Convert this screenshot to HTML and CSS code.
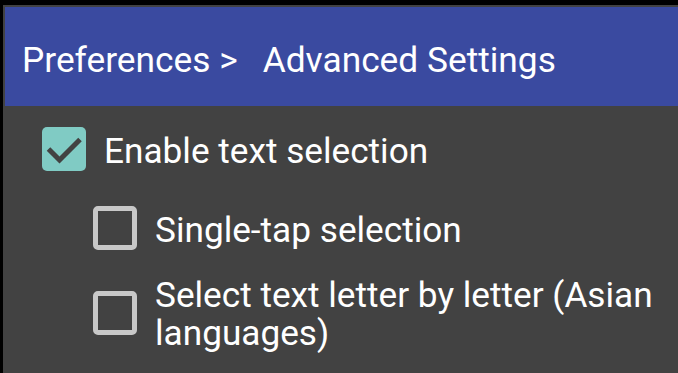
FILE: index.html
```html
<!DOCTYPE html>
<html lang="en">
<head>
  <meta charset="UTF-8">
  <title>Advanced Settings</title>
  <link rel="stylesheet" href="styles.css">
</head>
<body>
  <div class="dialogo">
    <div class="cabecalho">
      <span class="trilha">Preferences &gt;</span>
      <span class="titulo">Advanced Settings</span>
    </div>
    <ul class="opcoes">
      <li class="opcao">
        <span class="caixa marcada">
          <svg viewBox="0 0 44 44" width="44" height="44">
            <path d="M6.5 22 L17.5 33 L38 12.5" fill="none" stroke="#424242" stroke-width="5"/>
          </svg>
        </span>
        <span class="rotulo">Enable text selection</span>
      </li>
      <li class="opcao sub">
        <span class="caixa"></span>
        <span class="rotulo">Single-tap selection</span>
      </li>
      <li class="opcao sub">
        <span class="caixa"></span>
        <span class="rotulo">Select text letter by letter (Asian languages)</span>
      </li>
    </ul>
  </div>
</body>
</html>
```

FILE: styles.css
```css
* {
  box-sizing: border-box;
  margin: 0;
  padding: 0;
}

body {
  background: #000;
  font-family: Roboto, "Noto Sans", sans-serif;
  color: #fff;
  height: 100vh;
  overflow: hidden;
}

.dialogo {
  margin: 5px 0 0 3px;
  padding: 2px 0 0 2px;
  background: #424242;
  height: calc(100vh - 5px);
}

.cabecalho {
  height: 99px;
  background: #3a4aa0;
  display: flex;
  align-items: center;
  padding: 6px 0 0 17px;
  font-size: 35.3px;
}

.titulo {
  margin-left: 25px;
}

.opcoes {
  list-style: none;
  padding: 21px 12px 0 37px;
  display: flex;
  flex-direction: column;
}

.opcao {
  display: flex;
  align-items: center;
  gap: 18px;
  font-size: 35.2px;
  line-height: 38px;
}

.opcao.sub {
  margin-left: 51px;
}

.opcao:nth-child(2) {
  margin-top: 35px;
}

.opcao:nth-child(3) {
  margin-top: 23px;
}

.rotulo {
  padding-top: 3px;
}

.caixa {
  flex: none;
  width: 44px;
  height: 44px;
  border: 5px solid #c8c8c8;
  border-radius: 5px;
}

.caixa.marcada {
  border: none;
  background: #80cbc4;
}

.caixa svg {
  display: block;
}
```
